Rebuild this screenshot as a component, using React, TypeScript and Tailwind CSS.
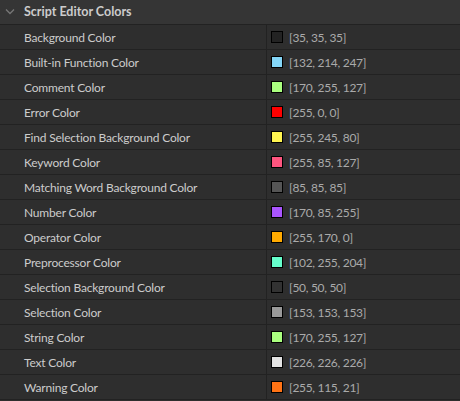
import React from "react";

const rows: { name: string; rgb: [number, number, number] }[] = [
  { name: "Background Color", rgb: [35, 35, 35] },
  { name: "Built-in Function Color", rgb: [132, 214, 247] },
  { name: "Comment Color", rgb: [170, 255, 127] },
  { name: "Error Color", rgb: [255, 0, 0] },
  { name: "Find Selection Background Color", rgb: [255, 245, 80] },
  { name: "Keyword Color", rgb: [255, 85, 127] },
  { name: "Matching Word Background Color", rgb: [85, 85, 85] },
  { name: "Number Color", rgb: [170, 85, 255] },
  { name: "Operator Color", rgb: [255, 170, 0] },
  { name: "Preprocessor Color", rgb: [102, 255, 204] },
  { name: "Selection Background Color", rgb: [50, 50, 50] },
  { name: "Selection Color", rgb: [153, 153, 153] },
  { name: "String Color", rgb: [170, 255, 127] },
  { name: "Text Color", rgb: [226, 226, 226] },
  { name: "Warning Color", rgb: [255, 115, 21] },
];

const ColorRow = ({ name, rgb }: { name: string; rgb: [number, number, number] }) => (
  <div className="flex h-[25px] border-b border-[#222222]">
    <div className="w-[267px] flex items-center pl-6 pt-[2px] text-[#cccccc] tracking-[-0.2px] border-r border-[#222222]">
      {name}
    </div>
    <div className="flex-1 flex items-center pl-[4px] gap-[6px] text-[#aaaaaa]">
      <span
        className="w-3 h-3 border border-black shrink-0"
        style={{ backgroundColor: `rgb(${rgb.join(",")})` }}
      />
      <span className="pt-[2px] tracking-[-0.3px]">[{rgb.join(", ")}]</span>
    </div>
  </div>
);

export default function App() {
  return (
    <div
      className="w-[460px] h-[401px] bg-[#2e2e2e] text-[12px] overflow-hidden"
      style={{ fontFamily: "Lato, 'Open Sans', sans-serif" }}
    >
      <div className="flex items-center h-[25px] bg-[#353535] border-b border-[#222222]">
        <svg width="24" height="24" viewBox="0 0 24 24" className="shrink-0">
          <path d="M6 9.5 L10 13.5 L14 9.5" fill="none" stroke="#777777" strokeWidth="1.3" />
        </svg>
        <span className="font-bold text-[#cccccc] text-[12.5px] pt-px">Script Editor Colors</span>
      </div>
      {rows.map((r) => (
        <ColorRow key={r.name} name={r.name} rgb={r.rgb} />
      ))}
    </div>
  );
}
